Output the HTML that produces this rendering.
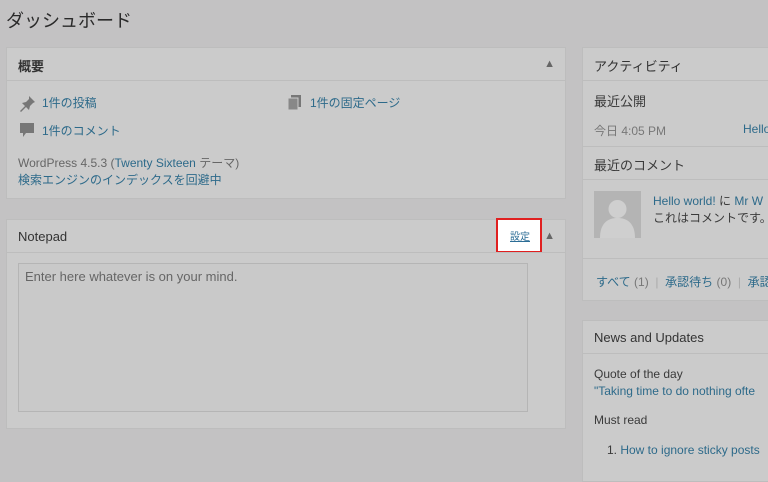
<!DOCTYPE html><html><head><meta charset="utf-8"><style>
body{margin:0;width:768px;height:469px;overflow:hidden;background:#c3c2c3;font-family:"Liberation Sans","Noto Sans CJK JP",sans-serif;color:#3a3a3a;font-size:12px;position:relative}
.a{position:absolute}
.box{position:absolute;background:#cbcbcb;border:1px solid #bdbdbd}
.l{color:#2d6a8a}
.g{color:#777}
.line{position:absolute;left:0;right:0;height:1px;background:#bdbdbd}
</style></head><body>
<div class="a" style="left:6px;top:7px;font-size:18px;color:#2a2a2a">ダッシュボード</div>

<div class="box" style="left:6px;top:47px;width:558px;height:150px">
<div class="a" style="left:11px;top:8px;font-size:13px;font-weight:bold;color:#333">概要</div>
<div class="a" style="right:10px;top:10px;font-size:11px;color:#666">▲</div>
<div class="line" style="top:32px"></div>
<svg class="a" style="left:12px;top:46px" width="18" height="18" viewBox="0 0 18 18"><path d="M10 2l6 6-2 1-3 3-1 4-3-3-5 5-1-1 5-5-3-3 4-1 3-3z" fill="#777"/></svg>
<div class="a l" style="left:35px;top:46px">1件の投稿</div>
<svg class="a" style="left:280px;top:46px" width="16" height="16"><rect x="4" y="1" width="10" height="12" fill="#777"/><rect x="1" y="4" width="10" height="12" fill="#888" stroke="#cbcbcb"/></svg>
<div class="a l" style="left:303px;top:46px">1件の固定ページ</div>
<svg class="a" style="left:12px;top:74px" width="16" height="16"><path d="M1 1h14v10H7l-3 4v-4H1z" fill="#777"/></svg>
<div class="a l" style="left:35px;top:74px">1件のコメント</div>
<div class="a g" style="left:11px;top:106px;color:#666">WordPress 4.5.3 (<span class="l">Twenty Sixteen</span> テーマ)</div>
<div class="a l" style="left:11px;top:123px">検索エンジンのインデックスを回避中</div>
</div>

<div class="box" style="left:6px;top:219px;width:558px;height:208px">
<div class="a" style="left:11px;top:9px;font-size:13px;color:#333">Notepad</div>
<div class="a" style="left:489px;top:-2px;width:42px;height:31px;background:#fff;border:2px solid #e02020"></div>
<div class="a" style="left:503px;top:8px;font-size:10px;color:#2c6d96;text-decoration:underline">設定</div>
<div class="a" style="right:10px;top:10px;font-size:11px;color:#666">▲</div>
<div class="line" style="top:32px"></div>
<div class="a" style="left:11px;top:43px;width:508px;height:147px;border:1px solid #b5b5b5;background:#c9c9c9"><div style="padding:5px 6px;font-size:13px;color:#666">Enter here whatever is on your mind.</div></div>
</div>

<div class="box" style="left:582px;top:47px;width:200px;height:252px">
<div class="a" style="left:11px;top:8px;font-size:13px;color:#333">アクティビティ</div>
<div class="line" style="top:32px"></div>
<div class="a" style="left:11px;top:43px;font-size:13px">最近公開</div>
<div class="a g" style="left:11px;top:74px">今日 4:05 PM</div>
<div class="a l" style="left:160px;top:74px">Hello</div>
<div class="line" style="top:98px"></div>
<div class="a" style="left:11px;top:107px;font-size:13px">最近のコメント</div>
<div class="line" style="top:131px"></div>
<svg class="a" style="left:11px;top:143px" width="47" height="47"><rect width="47" height="47" fill="#b4b4b4"/><circle cx="23.5" cy="18" r="9" fill="#cfcfcf"/><path d="M6 47c0-15 8-20 17.5-20S41 32 41 47z" fill="#cfcfcf"/></svg>
<div class="a" style="left:70px;top:144px;white-space:nowrap"><span class="l">Hello world!</span> に <span class="l">Mr W</span></div>
<div class="a" style="left:70px;top:161px;white-space:nowrap">これはコメントです。コ</div>
<div class="line" style="top:210px"></div>
<div class="a" style="left:13px;top:225px;white-space:nowrap"><span class="l">すべて</span> <span class="g">(1)</span> &nbsp;<span style="color:#aaa">|</span>&nbsp; <span class="l">承認待ち</span> <span class="g">(0)</span> &nbsp;<span style="color:#aaa">|</span>&nbsp; <span class="l">承認</span></div>
</div>

<div class="box" style="left:582px;top:320px;width:200px;height:160px">
<div class="a" style="left:11px;top:9px;font-size:13px;color:#333">News and Updates</div>
<div class="line" style="top:32px"></div>
<div class="a" style="left:11px;top:46px">Quote of the day</div>
<div class="a l" style="left:11px;top:63px;white-space:nowrap">"Taking time to do nothing ofte</div>
<div class="a" style="left:11px;top:92px">Must read</div>
<div class="a" style="left:24px;top:122px;white-space:nowrap">1. <span class="l">How to ignore sticky posts</span></div>
</div>
</body></html>
